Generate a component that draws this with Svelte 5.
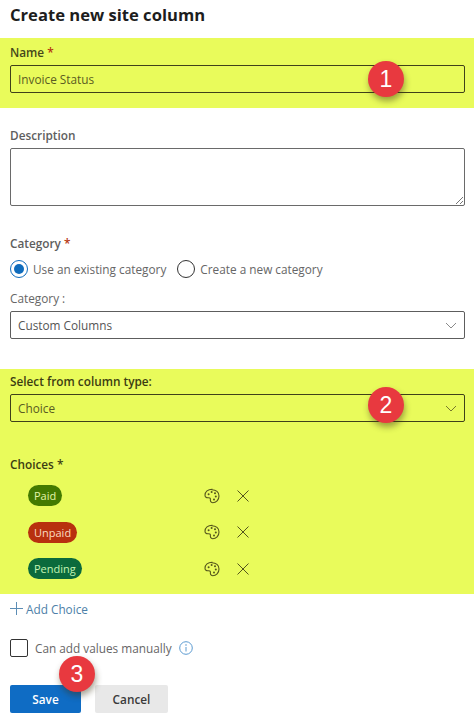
<script>
	const choices = [
		{ name: 'Paid', bg: '#437a00', fg: '#e4f5a8' },
		{ name: 'Unpaid', bg: '#b8300f', fg: '#fbdcc0' },
		{ name: 'Pending', bg: '#0b6a3c', fg: '#c4f5b4' }
	];
</script>

<div class="page">
	<h1>Create new site column</h1>

	<section class="hl name-block">
		<div class="label dark">Name <span class="req">*</span></div>
		<div class="input on-yellow">Invoice Status</div>
		<span class="badge badge-input">1</span>
	</section>

	<div class="field desc">
		<div class="label">Description</div>
		<div class="textarea">
			<svg class="grip" width="9" height="9" viewBox="0 0 9 9">
				<path d="M1 8L8 1M5 8L8 5" stroke="#777" fill="none" />
			</svg>
		</div>
	</div>

	<div class="field cat">
		<div class="label cat-label">Category <span class="req">*</span></div>
		<div class="radios">
			<span class="radio checked"><span class="dot"></span></span>
			<span class="radio-text">Use an existing category</span>
			<span class="radio"></span>
			<span class="radio-text">Create a new category</span>
		</div>
		<div class="label sub">Category :</div>
		<div class="input select">
			Custom Columns
			<svg class="chev" width="12" height="7" viewBox="0 0 12 7">
				<path d="M1 1L6 6L11 1" stroke="#8a8a8a" fill="none" />
			</svg>
		</div>
	</div>

	<section class="hl type-block">
		<div class="label dark strong">Select from column type:</div>
		<div class="input select on-yellow">
			Choice
			<svg class="chev" width="12" height="7" viewBox="0 0 12 7">
				<path d="M1 1L6 6L11 1" stroke="#77792c" fill="none" />
			</svg>
		</div>
		<span class="badge badge-input">2</span>

		<div class="label dark strong choices-label">Choices *</div>
		<div class="choices">
			{#each choices as c}
				<div class="choice">
					<div class="pill-cell">
						<span class="pill" style="background: {c.bg}; color: {c.fg}">{c.name}</span>
					</div>
					<svg class="palette" width="16" height="16" viewBox="0 0 16 16">
						<path
							d="M8 1.2C4 1.2 1 3.8 1 7.2c0 2 1.6 2.6 3 2.5 1.5-.1 2.6.3 2.4 1.7-.2 1.4.1 3.3 2.3 3.3 3.4 0 6.3-2.9 6.3-6.8 0-3.6-3-6.2-7-6.2z"
							fill="none"
							stroke="#55561c"
							stroke-width="1.1"
						/>
						<circle cx="4.6" cy="6.2" r="1" fill="#55561c" />
						<circle cx="7.6" cy="4" r="1" fill="#55561c" />
						<circle cx="11" cy="5.2" r="1" fill="#55561c" />
						<circle cx="11.8" cy="8.6" r="1" fill="#55561c" />
						<circle cx="10" cy="11.6" r="1" fill="#55561c" />
					</svg>
					<svg class="remove" width="12" height="12" viewBox="0 0 12 12">
						<path d="M.5 .5L11.5 11.5M11.5 .5L.5 11.5" stroke="#55561c" fill="none" />
					</svg>
				</div>
			{/each}
		</div>
	</section>

	<div class="add">
		<svg width="13" height="13" viewBox="0 0 13 13">
			<path d="M6.5 0V13M0 6.5H13" stroke="#5c8db5" fill="none" />
		</svg>
		Add Choice
	</div>

	<div class="manual">
		<span class="check"></span>
		<span class="manual-text">Can add values manually</span>
		<svg width="14" height="14" viewBox="0 0 14 14">
			<circle cx="7" cy="7" r="6.3" fill="none" stroke="#5c9bd1" />
			<path d="M7 6V10.5" stroke="#5c9bd1" fill="none" />
			<circle cx="7" cy="4" r=".8" fill="#5c9bd1" />
		</svg>
	</div>

	<div class="buttons">
		<span class="btn save">Save</span>
		<span class="btn cancel">Cancel</span>
		<span class="badge badge-save">3</span>
	</div>
</div>

<style>
	:global(body) {
		margin: 0;
		background: #fff;
	}

	.page {
		width: 474px;
		height: 719px;
		overflow: hidden;
		font-family: 'Open Sans', 'Noto Sans', sans-serif;
		font-size: 11.8px;
		color: #444;
		box-sizing: border-box;
	}

	h1 {
		margin: 0;
		padding: 3px 10px 0;
		height: 38px;
		box-sizing: border-box;
		font-size: 16.6px;
		line-height: 23px;
		font-weight: 700;
		color: #1d1d1d;
	}

	.hl {
		position: relative;
		background: #e9fb5b;
		padding: 0 9px 0 10px;
		box-sizing: border-box;
	}

	.name-block {
		height: 70px;
		padding-top: 7px;
	}

	.type-block {
		height: 225px;
		margin-top: 30px;
		padding-top: 5px;
	}

	.label {
		height: 16px;
		line-height: 14px;
		margin-bottom: 4px;
		font-weight: 600;
		color: #5e5e5e;
	}

	.label.dark {
		color: #46471a;
	}

	.label.strong {
		color: #3c3d12;
	}

	.req {
		color: #b5340f;
	}

	.input {
		position: relative;
		height: 28px;
		line-height: 26px;
		box-sizing: border-box;
		border: 1px solid #5d5d5d;
		border-radius: 2px;
		padding-left: 7px;
		color: #555;
		background: #fff;
	}

	.input.on-yellow {
		background: transparent;
		border-color: #3f401a;
		color: #5a5c22;
	}

	.chev {
		position: absolute;
		right: 7px;
		top: 10px;
	}

	.field.desc {
		margin-top: 20px;
	}

	.textarea {
		position: relative;
		height: 58px;
		box-sizing: border-box;
		border: 1px solid #6a6a6a;
		border-radius: 2px;
	}

	.grip {
		position: absolute;
		right: 0;
		bottom: 0;
	}

	.field {
		margin: 0 9px 0 10px;
	}

	.field.cat {
		margin-top: 30px;
	}

	.label.cat-label {
		margin-bottom: 7px;
	}

	.radios {
		display: flex;
		align-items: center;
		height: 20px;
		margin-bottom: 12px;
	}

	.radio {
		width: 18px;
		height: 18px;
		box-sizing: border-box;
		border: 1px solid #333;
		border-radius: 50%;
		display: flex;
		align-items: center;
		justify-content: center;
	}

	.radio.checked {
		border-color: #0f6cbd;
	}

	.dot {
		width: 10px;
		height: 10px;
		border-radius: 50%;
		background: #0f6cbd;
	}

	.radio-text {
		margin: 0 11px 0 5px;
		color: #666;
	}

	.label.sub {
		font-weight: 400;
		color: #666;
	}

	.choices-label {
		margin-top: 35px;
		margin-bottom: 12px;
	}

	.choices {
		display: flex;
		flex-direction: column;
		gap: 15.5px;
	}

	.choice {
		display: flex;
		align-items: center;
		height: 21px;
	}

	.pill-cell {
		width: 194px;
		padding-left: 18px;
		box-sizing: border-box;
	}

	.pill {
		display: inline-block;
		height: 21px;
		line-height: 21px;
		padding: 0 6px;
		border-radius: 11px;
		font-size: 11px;
	}

	.palette {
		margin-right: 17px;
	}

	.add {
		display: flex;
		align-items: center;
		gap: 3px;
		margin: 7px 0 0 10px;
		height: 15px;
		color: #4d7fa8;
	}

	.manual {
		display: flex;
		align-items: center;
		margin: 23px 0 0 10px;
		height: 18px;
	}

	.check {
		width: 18px;
		height: 18px;
		box-sizing: border-box;
		border: 1px solid #333;
		border-radius: 2px;
		margin-right: 7px;
	}

	.manual-text {
		color: #666;
		margin-right: 7px;
	}

	.buttons {
		position: relative;
		display: flex;
		gap: 14px;
		margin: 28px 0 0 10px;
	}

	.btn {
		height: 28px;
		line-height: 28px;
		text-align: center;
		font-weight: 600;
		border-radius: 2px;
	}

	.save {
		width: 71px;
		background: #0f6cc4;
		color: #fff;
	}

	.cancel {
		width: 73px;
		background: #e8e8e8;
		color: #3a3a3a;
	}

	.badge {
		position: absolute;
		width: 36px;
		height: 36px;
		border-radius: 50%;
		background: #e8393f;
		color: #fff;
		font-family: 'Liberation Sans', sans-serif;
		font-size: 23px;
		line-height: 36px;
		text-align: center;
		box-shadow: 1px 4px 6px rgba(60, 50, 20, 0.45);
	}

	.badge-input {
		left: 368px;
		top: 23px;
	}

	.type-block .badge-input {
		top: 18px;
	}

	.badge-save {
		left: 49px;
		top: -29px;
	}
</style>
